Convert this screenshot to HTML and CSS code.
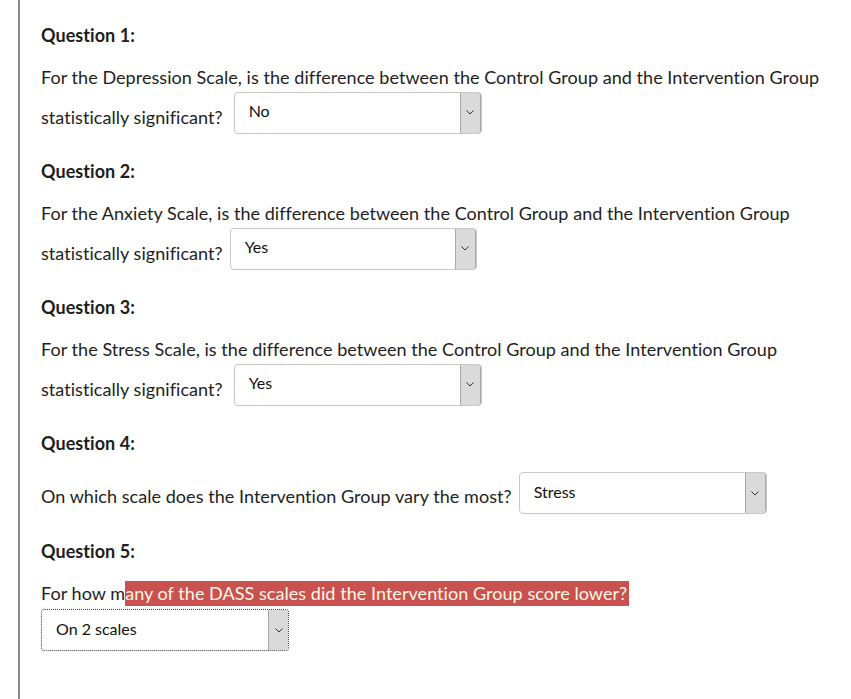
FILE: index.html
```html
<!DOCTYPE html>
<html>
<head>
<meta charset="utf-8">
<link rel="stylesheet" href="styles.css">
</head>
<body>
<div class="page">
  <section class="question">
    <h2 class="title">Question 1:</h2>
    <p class="line">For the Depression Scale, is the difference between the Control Group and the Intervention Group</p>
    <div class="row">
      <span class="label">statistically significant?</span>
      <div class="select"><span class="value">No</span><span class="arrow"><svg width="8" height="5" viewBox="0 0 8 5"><path d="M0.5 0.5 L4 4 L7.5 0.5" fill="none" stroke="#333" stroke-width="1"/></svg></span></div>
    </div>
  </section>
  <section class="question">
    <h2 class="title">Question 2:</h2>
    <p class="line">For the Anxiety Scale, is the difference between the Control Group and the Intervention Group</p>
    <div class="row">
      <span class="label">statistically significant?</span>
      <div class="select select-q2"><span class="value">Yes</span><span class="arrow"><svg width="8" height="5" viewBox="0 0 8 5"><path d="M0.5 0.5 L4 4 L7.5 0.5" fill="none" stroke="#333" stroke-width="1"/></svg></span></div>
    </div>
  </section>
  <section class="question">
    <h2 class="title">Question 3:</h2>
    <p class="line">For the Stress Scale, is the difference between the Control Group and the Intervention Group</p>
    <div class="row">
      <span class="label">statistically significant?</span>
      <div class="select"><span class="value">Yes</span><span class="arrow"><svg width="8" height="5" viewBox="0 0 8 5"><path d="M0.5 0.5 L4 4 L7.5 0.5" fill="none" stroke="#333" stroke-width="1"/></svg></span></div>
    </div>
  </section>
  <section class="question q4">
    <h2 class="title">Question 4:</h2>
    <div class="row row-q4">
      <span class="label">On which scale does the Intervention Group vary the most?</span>
      <div class="select select-q4"><span class="value">Stress</span><span class="arrow"><svg width="8" height="5" viewBox="0 0 8 5"><path d="M0.5 0.5 L4 4 L7.5 0.5" fill="none" stroke="#333" stroke-width="1"/></svg></span></div>
    </div>
  </section>
  <section class="question q5">
    <h2 class="title">Question 5:</h2>
    <p class="line line-q5">For how m<span class="hl">any of the DASS scales did the Intervention Group score lower?</span></p>
    <div class="select select-focus"><span class="value">On 2 scales</span><span class="arrow"><svg width="8" height="5" viewBox="0 0 8 5"><path d="M0.5 0.5 L4 4 L7.5 0.5" fill="none" stroke="#333" stroke-width="1"/></svg></span></div>
  </section>
</div>
</body>
</html>
```
FILE: styles.css
```css
html, body {
  margin: 0;
  padding: 0;
  background: #ffffff;
}
body {
  font-family: Lato, "Liberation Sans", sans-serif;
  color: #1e1e1e;
  letter-spacing: 0.05px;
}
.page {
  margin-left: 18px;
  border-left: 2px solid #8a8a8a;
  min-height: 699px;
  box-sizing: border-box;
  padding: 25px 0 0 21px;
}
.question {
  margin-bottom: 24px;
}
.title {
  margin: 0;
  font-size: 18px;
  font-weight: 700;
  line-height: 20px;
}
.line {
  margin: 12px 0 0 0;
  font-size: 18px;
  line-height: 40px;
  white-space: nowrap;
}
.row {
  display: flex;
  align-items: center;
  height: 40px;
  font-size: 18px;
}
.label {
  line-height: 40px;
  white-space: nowrap;
}
.select {
  display: flex;
  align-items: stretch;
  width: 248px;
  height: 42px;
  box-sizing: border-box;
  border: 1px solid #c8c8c8;
  border-radius: 4px;
  margin-left: 11px;
  margin-bottom: 9px;
  background: #fff;
  font-family: Lato, "Noto Sans", sans-serif;
  font-size: 16px;
  letter-spacing: 0;
  color: #111;
}
.select-q2 {
  margin-left: 7px;
  width: 247px;
}
.value {
  flex: 1;
  padding: 0 0 4px 14px;
  display: flex;
  align-items: center;
}
.arrow {
  width: 19px;
  background: #dadada;
  border-left: 1px solid #a8a8a8;
  border-right: 1px solid #a8a8a8;
  border-radius: 0 3px 3px 0;
  display: flex;
  align-items: center;
  justify-content: center;
}
.q4 {
  margin-bottom: 27px;
}
.row-q4 {
  margin-top: 19px;
  height: 42px;
}
.row-q4 .label {
  position: relative;
  top: 3px;
}
.select-q4 {
  margin-left: 7px;
  margin-bottom: 0;
}
.line-q5 {
  line-height: 32px;
  margin-top: 16px;
}
.hl {
  background: #c9514f;
  color: #fff8e6;
  padding: 1px 2px 2px 0;
}
.select-focus {
  margin: 0;
  width: 248px;
  border: 1px dotted #444;
  box-shadow: 0 0 1px #999;
}
.select-focus .arrow {
  border-left: 1px solid #a8a8a8;
  border-right: none;
}
```
